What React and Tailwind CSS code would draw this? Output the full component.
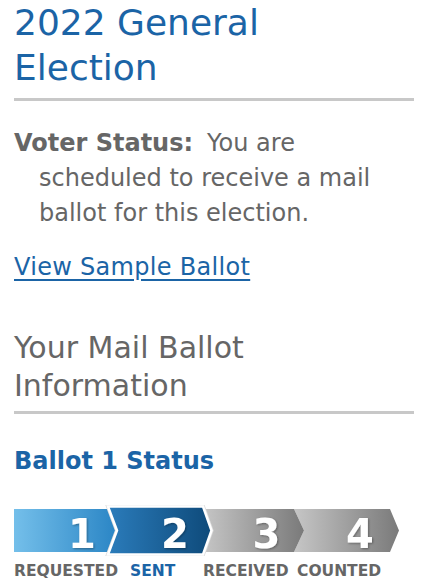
import React from "react";

// Ballot progress steps shown under "Ballot 1 Status"
const steps = [
  { num: "1", label: "REQUESTED", width: "w-[116px]", active: false },
  { num: "2", label: "SENT", width: "w-[73px]", active: true },
  { num: "3", label: "RECEIVED", width: "w-[94px]", active: false },
  { num: "4", label: "COUNTED", width: "w-[100px]", active: false },
];

const StatusChevrons = () => {
  return (
    <svg width="400" height="51" viewBox="0 0 400 51" className="block">
      <defs>
        <linearGradient id="gLight" x1="0" y1="0" x2="1" y2="0">
          <stop offset="0" stopColor="#74bfea" />
          <stop offset="1" stopColor="#2a85c5" />
        </linearGradient>
        <linearGradient id="gDark" x1="0" y1="0" x2="1" y2="0">
          <stop offset="0" stopColor="#2b7cbb" />
          <stop offset="1" stopColor="#0e4a7a" />
        </linearGradient>
        <linearGradient id="gGray" x1="0" y1="0" x2="1" y2="0">
          <stop offset="0" stopColor="#c6c6c6" />
          <stop offset="1" stopColor="#7a7a7a" />
        </linearGradient>
        <filter id="numShadow" x="-20%" y="-20%" width="140%" height="140%">
          <feDropShadow dx="1" dy="1" stdDeviation="0.8" floodColor="#000" floodOpacity="0.35" />
        </filter>
      </defs>

      {/* step 4 and 3 first, so each tip sits over the next notch */}
      <polygon points="280,4 376,4 385,25.5 376,47 280,47 290,25.5" fill="url(#gGray)" />
      <polygon points="189,4 280,4 290,25.5 280,47 189,47 197,25.5" fill="url(#gGray)" />
      <polygon points="0,4 96,4 103,25.5 96,47 0,47" fill="url(#gLight)" />

      {/* current step has a white outline */}
      <polygon
        points="94,1.5 189,1.5 197.5,25.5 189,49.5 94,49.5 103,25.5"
        fill="none"
        stroke="#dcdcdc"
        strokeWidth="4"
        strokeLinejoin="miter"
      />
      <polygon
        points="94,1.5 189,1.5 197.5,25.5 189,49.5 94,49.5 103,25.5"
        fill="url(#gDark)"
        stroke="#ffffff"
        strokeWidth="2.5"
        strokeLinejoin="miter"
      />

      <g
        fill="#ffffff"
        fontFamily="'DejaVu Sans', Verdana, sans-serif"
        fontWeight="700"
        fontSize="40"
        textAnchor="middle"
        filter="url(#numShadow)"
      >
        <text x="68" y="43">1</text>
        <text x="161" y="43">2</text>
        <text x="252.5" y="43">3</text>
        <text x="346" y="43">4</text>
      </g>
    </svg>
  );
};

const App = () => {
  return (
    <div className="min-h-[585px] bg-white font-['DejaVu_Sans',Verdana,sans-serif] text-[#666666]">
      <div className="w-[400px] ml-[14px]">
        {/* Election heading */}
        <h1 className="text-[36px] leading-[45px] font-normal text-[#1b64a6] pb-[8px] border-b-[3px] border-[#c8c8c8]">
          2022 General
          <br />
          Election
        </h1>

        {/* Voter status with hanging indent */}
        <p className="mt-[25px] text-[24px] leading-[35px] pl-[25px] -indent-[25px]">
          <span className="font-bold mr-[14px]">Voter Status:</span>
          You are scheduled to receive a mail ballot for this election.
        </p>

        <div className="mt-[19px] text-[24px] leading-[35px]">
          <a href="#" className="text-[#1b64a6] underline underline-offset-[4px] decoration-[2px] tracking-[0.3px]">
            View Sample Ballot
          </a>
        </div>

        {/* Mail ballot section */}
        <h2 className="mt-[44px] text-[30px] leading-[38px] font-normal text-[#666666] pb-[6px] border-b-[3px] border-[#c8c8c8]">
          Your Mail Ballot Information
        </h2>

        <h3 className="mt-[30px] text-[24px] leading-[35px] font-bold text-[#1b64a6]">
          Ballot 1 Status
        </h3>

        <div className="mt-[26px]">
          <StatusChevrons />
        </div>

        <div className="flex mt-[5px] text-[15.5px] leading-[20px] font-bold">
          {steps.map((step) => (
            <span
              key={step.num}
              className={`${step.width} shrink-0 whitespace-nowrap ${
                step.active ? "text-[#1b64a6]" : "text-[#666666]"
              }`}
            >
              {step.label}
            </span>
          ))}
        </div>
      </div>
    </div>
  );
};

export default App;
